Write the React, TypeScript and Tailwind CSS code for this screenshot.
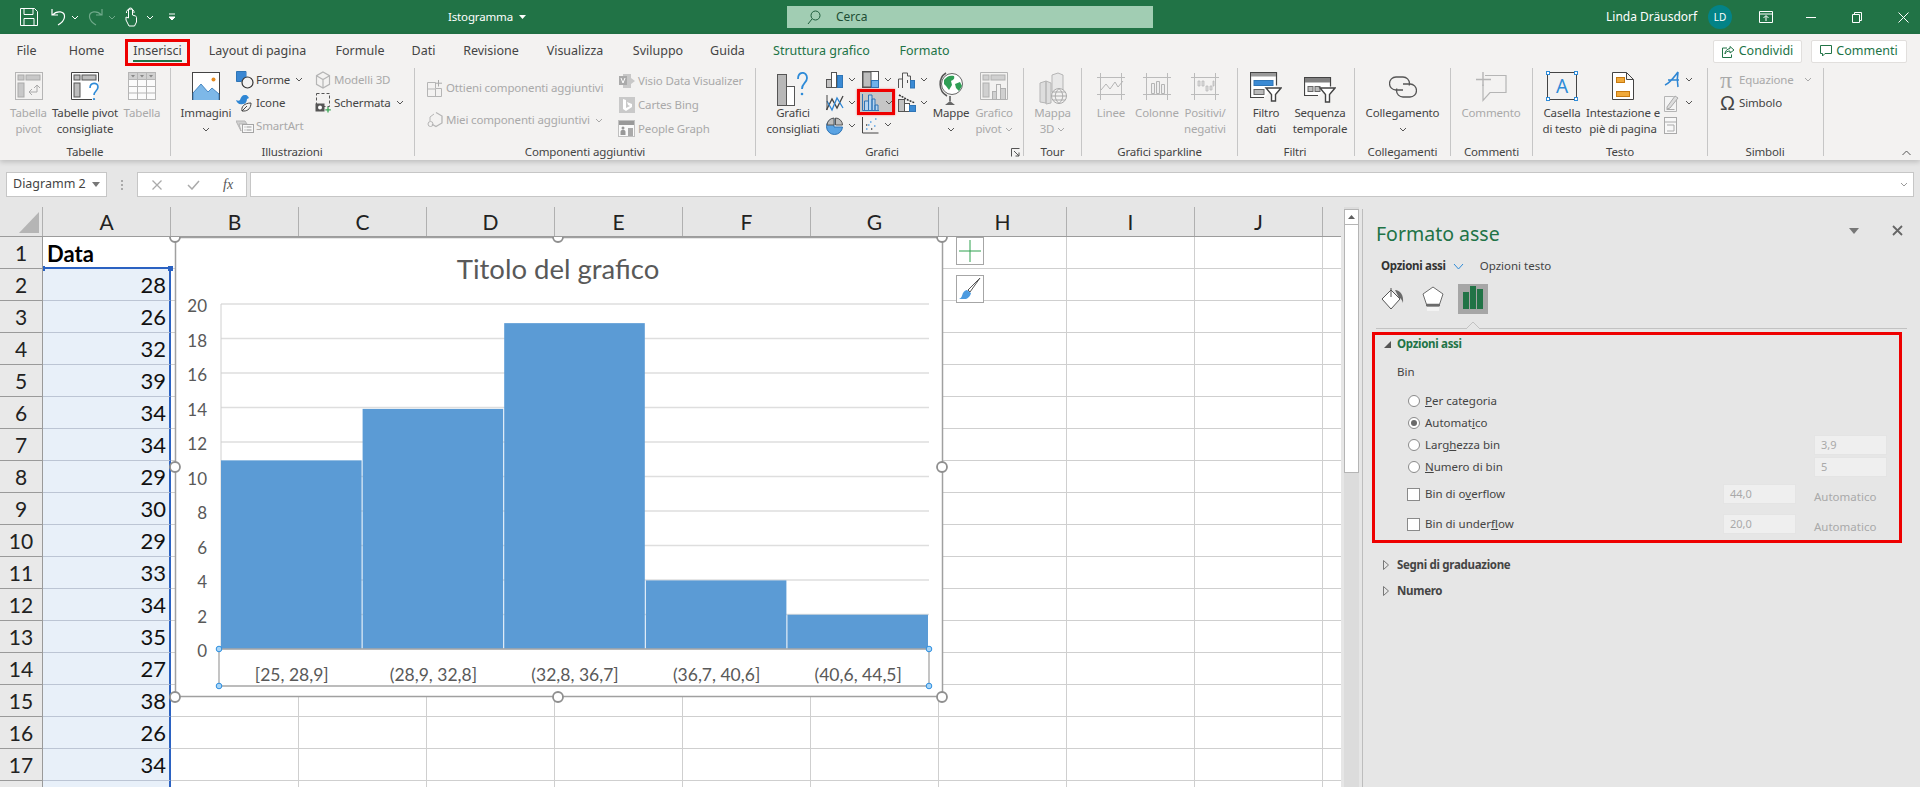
import React from 'react';

const MUTED = '#a9a9a9';
const rows = [null, 28, 26, 32, 39, 34, 34, 29, 30, 29, 33, 34, 35, 27, 38, 26, 34, null];
const columns = ['A', 'B', 'C', 'D', 'E', 'F', 'G', 'H', 'I', 'J'];

const Chev = ({ c = '#555', className = '' }: { c?: string; className?: string }) => (
  <svg width="8" height="5" viewBox="0 0 8 5" className={`shrink-0 ${className}`}>
    <path d="M1 1l3 3 3-3" fill="none" stroke={c} strokeWidth="1" />
  </svg>
);

const Ic = ({ w = 28, h = 28, children }: { w?: number; h?: number; children: React.ReactNode }) => (
  <svg width={w} height={h} viewBox={`0 0 ${w} ${h}`} className="shrink-0">
    {children}
  </svg>
);

// ---- ribbon icons ----
const PivotIcon = () => (
  <Ic>
    <rect x=".5" y=".5" width="27" height="27" fill="none" stroke="#b5b5b5" />
    <rect x="3" y="3" width="6" height="5" fill="#c8c8c8" stroke="#aaa" />
    <rect x="11" y="3" width="14" height="5" fill="#c8c8c8" stroke="#aaa" />
    <rect x="3" y="11" width="6" height="14" fill="#c8c8c8" stroke="#aaa" />
    <path d="M22 13v7h-8m3-3l-3 3 3 3M19 16l3-3 3 3" fill="none" stroke="#aaa" />
  </Ic>
);
const PivotHelpIcon = () => (
  <Ic>
    <path d="M21 27.500H.5V.5h27v9" fill="#fff" stroke="#444" />
    <rect x="3" y="3" width="6" height="5" fill="#bdbdbd" stroke="#555" />
    <rect x="11" y="3" width="14" height="5" fill="#bdbdbd" stroke="#555" />
    <rect x="3" y="11" width="6" height="14" fill="#bdbdbd" stroke="#555" />
    <path d="M19 16c0-6 8-6 8-1 0 4-4 4-4 8" fill="none" stroke="#2e8bd8" strokeWidth="1.600" />
    <circle cx="23" cy="27" r="1.100" fill="#2e8bd8" />
  </Ic>
);
const TableIcon = () => (
  <Ic>
    <rect x=".5" y=".5" width="27" height="27" fill="#fbfbfb" stroke="#b5b5b5" />
    <rect x="1" y="1" width="26" height="6" fill="#d0d0d0" />
    <path d="M9.500 1v26M18.500 1v26M1 7.500h26M1 14.500h26M1 21h26" stroke="#b5b5b5" fill="none" />
    <path d="M3 3h4L5 5.500zM12 3h4l-2 2.500zM21 3h4l-2 2.500z" fill="#888" />
  </Ic>
);
const ImagesIcon = () => (
  <Ic>
    <rect x=".5" y=".5" width="27" height="27" fill="#fff" stroke="#444" />
    <path d="M1 21l8-9 7 8 4-4 7 6v7H1z" fill="#7db8e8" stroke="#2e75b6" strokeWidth=".8" />
    <circle cx="21.500" cy="7.500" r="2" fill="#e58a1f" />
  </Ic>
);
const ShapesIcon = () => (
  <Ic w={18} h={18}>
    <path d="M10 7.500V.5H.5v10h5" fill="#3a87d2" stroke="#2e75b6" />
    <rect x="1" y="1" width="9" height="9" fill="#3a87d2" />
    <circle cx="11.500" cy="11.500" r="5.500" fill="#f3f2f1" stroke="#333" strokeWidth="1.200" />
  </Ic>
);
const IconsIcon = () => (
  <Ic w={18} h={18}>
    <path d="M0 6c2 1 3 1 4 0 1-3 2-5 5-5s3 2 4 3l-2 1c0 3-2 5-4 5-4 1-6-1-7-4z" fill="#2e86d4" />
    <path d="M6 17c-1-4 2-8 9-8 0 5-3 8-7 8zM6 17l5-5" fill="#f3f2f1" stroke="#444" />
  </Ic>
);
const SmartArtIcon = () => (
  <Ic w={18} h={18}>
    <path d="M0 4h9l2 3H3l2 7z" fill="#d0d0d0" stroke="#b5b5b5" />
    <rect x="6.500" y="7.500" width="11" height="8" fill="#f8f8f8" stroke="#a5a5a5" />
    <path d="M8.500 10h1m1 0h5m-7 3h1m1 0h5" stroke="#999" />
  </Ic>
);
const Model3DIcon = () => (
  <Ic w={16} h={18}>
    <path d="M8 1l6.500 3.700v8.600L8 17l-6.500-3.700V4.700zM1.500 4.700L8 8.500l6.500-3.800M8 8.500V17" fill="none" stroke="#b5b5b5" strokeWidth="1.200" />
  </Ic>
);
const ScreenshotIcon = () => (
  <Ic w={16} h={20}>
    <rect x="1.500" y=".5" width="13" height="13" fill="none" stroke="#555" strokeDasharray="3 2" />
    <rect x=".5" y="10.500" width="9" height="8" fill="#555" />
    <circle cx="5" cy="14.500" r="2" fill="#fff" />
    <path d="M13 14v5.500M10.300 16.800h5.500" stroke="#3aa655" strokeWidth="1.300" />
  </Ic>
);
const AddInsIcon = () => (
  <Ic w={16} h={18}>
    <path d="M.5 3.500h8v6h6v8H.5zM.5 10h8M8.500 10v7.500" fill="none" stroke="#b5b5b5" />
    <path d="M11.500 1v6.500M8.500 4.200h6.500" stroke="#aaa" fill="none" />
  </Ic>
);
const MyAddInsIcon = () => (
  <Ic w={16} h={18}>
    <path d="M9 1.500l6 3.500v7l-6 3.500-4-2.300" fill="none" stroke="#b5b5b5" strokeWidth="1.300" />
    <circle cx="3.500" cy="13" r="2.500" fill="none" stroke="#b5b5b5" />
    <path d="M7 3L3 6v4" fill="none" stroke="#b5b5b5" />
  </Ic>
);
const VisioIcon = () => (
  <Ic w={18} h={18}>
    <path d="M5 2h8v4l4 3-4 3v4H5v-4L1 9l4-3z" fill="#c8c8c8" />
    <rect x="1" y="4" width="8" height="9" fill="#aaa" />
    <path d="M3 6l2 5 2-5" stroke="#fff" fill="none" />
  </Ic>
);
const BingIcon = () => (
  <Ic w={18} h={18}>
    <rect x="1" y="1" width="16" height="16" fill="#c9c9c9" />
    <path d="M5 3l3 1v8l4-2-2-1-1-3 5 2v3l-6 4-3-2z" fill="#fff" />
  </Ic>
);
const PeopleIcon = () => (
  <Ic w={18} h={18}>
    <rect x=".5" y=".5" width="16" height="16" fill="#fafafa" stroke="#c0c0c0" />
    <rect x="1" y="1" width="15" height="4" fill="#999" />
    <circle cx="5" cy="8" r="1.500" fill="#999" />
    <path d="M2.500 15v-3c0-3 5-3 5 0v3z" fill="#999" />
    <rect x="10" y="8" width="5" height="8" fill="#aaa" />
  </Ic>
);
const RecommendedIcon = () => (
  <Ic w={32} h={34}>
    <rect x=".5" y="2.500" width="9" height="31" fill="#b8b8b8" stroke="#555" />
    <rect x="9.500" y="14.500" width="8" height="19" fill="#fff" stroke="#555" />
    <path d="M21 7c0-8 9-8 9-1 0 5-5 5-5 11" fill="none" stroke="#2e8bd8" strokeWidth="1.800" />
    <circle cx="25" cy="22" r="1.300" fill="#2e8bd8" />
  </Ic>
);
const BarsIcon = () => (
  <Ic w={18} h={18}>
    <rect x=".5" y="8.500" width="5" height="8" fill="#c2c2c2" stroke="#555" />
    <rect x="5.500" y="1.500" width="5" height="15" fill="#fff" stroke="#555" />
    <rect x="11.500" y="4.500" width="5" height="12" fill="#3a8ad4" stroke="#2e75b6" />
  </Ic>
);
const TreemapIcon = () => (
  <Ic w={18} h={18}>
    <rect x=".5" y=".5" width="16" height="16" fill="#fff" stroke="#555" />
    <rect x="1" y="1" width="8" height="15" fill="#bdbdbd" stroke="#555" />
    <rect x="9.500" y="9.500" width="7" height="7" fill="#6fb1ea" stroke="#2e75b6" />
  </Ic>
);
const WaterfallIcon = () => (
  <Ic w={18} h={18}>
    <path d="M.5 17V8h4V2h5v3h3v12" fill="none" stroke="#555" />
    <path d="M4.500 17V8M9.500 9v3" stroke="#555" fill="none" />
    <rect x="12.500" y="9.500" width="4" height="7.500" fill="#3a8ad4" stroke="#2e75b6" />
  </Ic>
);
const LineIcon = () => (
  <Ic w={18} h={18}>
    <path d="M.5 16L6 5l5 9 6-12" fill="none" stroke="#444" strokeWidth="1.300" />
    <path d="M1 7l5 9 5-12 6 10" fill="none" stroke="#2e86d4" strokeWidth="1.300" />
    <path d="M1 16V1" stroke="#444" />
  </Ic>
);
const HistogramIcon = () => (
  <Ic w={18} h={18}>
    <path d="M.5 1v16.500H17" fill="none" stroke="#2e75b6" />
    <path d="M2.500 17V8h4v9M6.500 17V2h3.500v15M10 17V6h3v11M13 17v-5h3v5" fill="#b8d4ee" stroke="#2e75b6" />
  </Ic>
);
const ComboIcon = () => (
  <Ic w={18} h={20}>
    <rect x=".5" y="6.500" width="6" height="12" fill="#c2c2c2" stroke="#555" />
    <rect x="6.500" y="10.500" width="5" height="8" fill="#fff" stroke="#555" />
    <rect x="11.500" y="12.500" width="6" height="6" fill="#3a8ad4" stroke="#2e75b6" />
    <path d="M1 2l9 5 7 3" stroke="#333" strokeDasharray="2 1" strokeWidth="1.500" fill="none" />
  </Ic>
);
const PieIcon = () => (
  <Ic w={18} h={18}>
    <path d="M8 1.500A8 8 0 1 0 16.500 10H8z" fill="#5aa3e3" stroke="#2e75b6" />
    <path d="M8 1A8 8 0 0 0 1 8h7z" fill="#bdbdbd" stroke="#555" />
    <path d="M9.500 1.500a7 7 0 0 1 7 7h-7z" fill="#bdbdbd" stroke="#555" transform="translate(0 -.5)" />
  </Ic>
);
const ScatterIcon = () => (
  <Ic w={18} h={18}>
    <path d="M.5 1v16h16" fill="none" stroke="#444" />
    <path d="M4 13h1.500M8 6h1.500M12 10h1.500M13 3h1.500M6 9h1.500" stroke="#5aa3e3" strokeWidth="1.500" />
    <path d="M4 9h1.300M9 13h1.300" stroke="#444" strokeWidth="1.300" />
  </Ic>
);
const GlobeIcon = () => (
  <Ic w={26} h={34}>
    <circle cx="14" cy="12" r="10.500" fill="#fff" stroke="#666" />
    <path d="M6 8c3-4 6-5 10-4 1 3-1 4-3 5l1 4-3 5-3-4-2-2zM17 12l5-2 2 4-3 5-3-3z" fill="#2f9e55" />
    <path d="M8 1C0 6 0 19 9 24" fill="none" stroke="#555" strokeWidth="1.500" />
    <path d="M12 24v5" stroke="#555" strokeWidth="1.500" />
    <path d="M12 29l-5 4h10z" fill="#666" />
  </Ic>
);
const PivotChartIcon = () => (
  <Ic>
    <path d="M27.500 27.500H.5V.5h27z" fill="none" stroke="#b5b5b5" />
    <rect x="3" y="3" width="6" height="5" fill="#d0d0d0" stroke="#b0b0b0" />
    <rect x="11" y="3" width="14" height="5" fill="#d0d0d0" stroke="#b0b0b0" />
    <rect x="3" y="11" width="6" height="14" fill="#d0d0d0" stroke="#b0b0b0" />
    <rect x="12.500" y="19.500" width="4" height="8" fill="#d0d0d0" stroke="#b0b0b0" />
    <rect x="16.500" y="12.500" width="4" height="15" fill="#f3f2f1" stroke="#b0b0b0" />
    <rect x="20.500" y="16.500" width="5" height="11" fill="#d0d0d0" stroke="#b0b0b0" />
  </Ic>
);
const Map3DIcon = () => (
  <Ic w={28} h={34}>
    <path d="M1 11l6-2v22l-6-1zM7 9l5 2v20l-5 1z" fill="#ddd" stroke="#b5b5b5" />
    <path d="M13 3l6-2 5 2v17H13z" fill="#e8e8e8" stroke="#b5b5b5" />
    <circle cx="20" cy="24" r="7.500" fill="#f3f2f1" stroke="#aaa" />
    <path d="M12.500 24h15M20 16.500c-5 5-5 10 0 15m0-15c5 5 5 10 0 15M14 20h12M14 28h12" fill="none" stroke="#aaa" />
  </Ic>
);
const SparkFrame = ({ children }: { children: React.ReactNode }) => (
  <Ic>
    <path d="M0 5.500h28M0 22.500h28M3.500 1v27M24.500 1v27" stroke="#bbb" fill="none" />
    {children}
  </Ic>
);
const SparkLineIcon = () => (
  <SparkFrame>
    <path d="M4 18l5-6 4 5 5-7 3 5 5-6" fill="none" stroke="#b5b5b5" />
  </SparkFrame>
);
const SparkColIcon = () => (
  <SparkFrame>
    <path d="M8.500 11.500h3v10h-3zM13.500 9.500h3v12h-3zM18.500 12.500h3v9h-3z" fill="#eee" stroke="#b5b5b5" />
  </SparkFrame>
);
const SparkPosIcon = () => (
  <SparkFrame>
    <path d="M7 9h2v5H7zM11 9h2v5h-2zM15 14h2v5h-2zM19 14h2v4h-2zM22 9h1v5h-1z" fill="#ddd" stroke="#b5b5b5" strokeWidth=".7" />
  </SparkFrame>
);
const SlicerIcon = () => (
  <Ic w={32} h={30}>
    <path d="M14 25.500H.5V.5h26v13" fill="#fff" stroke="#444" strokeWidth="1.200" />
    <rect x="1" y="1" width="25" height="3.500" fill="#999" />
    <rect x="4" y="8.500" width="19" height="5" fill="#3a8ad4" stroke="#2e75b6" />
    <rect x="4" y="17.500" width="10" height="5" fill="#bbb" stroke="#666" />
    <path d="M16 16h15l-5.500 6.500V29h-4v-6.500z" fill="#fff" stroke="#444" strokeWidth="1.400" />
  </Ic>
);
const TimelineIcon = () => (
  <Ic w={32} h={26}>
    <path d="M14 18.500H.5V.5h26v9" fill="#fff" stroke="#444" strokeWidth="1.200" />
    <rect x="1" y="1" width="25" height="4.500" fill="#808080" />
    <rect x="4" y="9.500" width="5" height="5" fill="#bbb" stroke="#666" />
    <rect x="11" y="9.500" width="5" height="5" fill="#bbb" stroke="#666" />
    <path d="M16 11h15l-5.500 6.500V25h-4v-7.500z" fill="#fff" stroke="#444" strokeWidth="1.400" />
  </Ic>
);
const LinkIcon = () => (
  <Ic w={28} h={24}>
    <path d="M14 15H7A6.500 6.500 0 0 1 7 2h7a6.500 6.500 0 0 1 6.500 6.500c0 1-.2 1.500-.5 2" fill="none" stroke="#555" strokeWidth="1.300" />
    <path d="M14 9h7a6.500 6.500 0 0 1 0 13h-7a6.500 6.500 0 0 1-6.500-6.500c0-1 .2-1.500.5-2" fill="none" stroke="#555" strokeWidth="1.300" />
  </Ic>
);
const CommentIcon = () => (
  <Ic w={32} h={31}>
    <path d="M10 3.500h21v17H15l-7 8v-16" fill="none" stroke="#b5b5b5" strokeWidth="1.200" />
    <path d="M8 0v14M1 7.500h15" stroke="#b5b5b5" strokeWidth="1.400" />
  </Ic>
);
const TextBoxIcon = () => (
  <div className="relative h-[28px] w-[30px] border border-[#444] flex items-center justify-center text-[19px] leading-none text-[#2e8bd8] font-['Noto_Sans']">
    A
    <span className="absolute -left-[2px] -top-[2px] h-[4px] w-[4px] border border-[#2e8bd8] bg-white" />
    <span className="absolute -right-[2px] -top-[2px] h-[4px] w-[4px] border border-[#2e8bd8] bg-white" />
    <span className="absolute -left-[2px] -bottom-[2px] h-[4px] w-[4px] border border-[#2e8bd8] bg-white" />
    <span className="absolute -right-[2px] -bottom-[2px] h-[4px] w-[4px] border border-[#2e8bd8] bg-white" />
  </div>
);
const HeaderFooterIcon = () => (
  <Ic w={22} h={28}>
    <path d="M.5.5h14l7 7v20H.5zM14.500.5v7h7" fill="#fff" stroke="#444" />
    <rect x="4.500" y="5.500" width="8" height="5" fill="#f0a93a" stroke="#c77a10" />
    <rect x="4.500" y="19.500" width="13" height="5" fill="#f0a93a" stroke="#c77a10" />
  </Ic>
);
const WordArtIcon = () => (
  <Ic w={16} h={18}>
    <path d="M1 14C6 12 10 6 14 1c-1 5-1 10 0 15M4 9h11" fill="none" stroke="#2e86d4" strokeWidth="1.600" />
  </Ic>
);
const SignIcon = () => (
  <Ic w={16} h={18}>
    <path d="M.5 2.500h9l3 3v12H.5z" fill="#f4f4f4" stroke="#b5b5b5" />
    <path d="M3 13l8-11 3 2-8 10-3 1zM2.500 15.500h8" fill="#ddd" stroke="#aaa" />
  </Ic>
);
const ObjectIcon = () => (
  <Ic w={14} h={18}>
    <rect x=".5" y=".5" width="12" height="16" fill="#f8f8f8" stroke="#aaa" />
    <path d="M.5 5h12M3 8h7v6H3" fill="none" stroke="#aaa" />
  </Ic>
);

// ---- ribbon pieces ----
const Big = ({ icon, lines, w, muted, chevron, inlineChevron }: { icon: React.ReactNode; lines: string[]; w: string; muted?: boolean; chevron?: boolean; inlineChevron?: boolean }) => (
  <div className={`${w} shrink-0 flex flex-col items-center pt-[4px] text-[11.5px] tracking-[-0.15px] leading-[16px] ${muted ? 'text-[#a9a9a9]' : 'text-[#444]'}`}>
    <div className="h-[33px]">{icon}</div>
    {lines.map((l, i) => (
      <div key={l} className="whitespace-nowrap flex items-center gap-[3px]">
        {l}
        {inlineChevron && i === lines.length - 1 && <Chev c={MUTED} />}
      </div>
    ))}
    {chevron && (
      <div className="h-[16px] flex items-center">
        <Chev />
      </div>
    )}
  </div>
);

const Small = ({ icon, label, muted, chevron, h = 'h-[23px]', gap = 'gap-[2px]' }: { icon: React.ReactNode; label: string; muted?: boolean; chevron?: boolean; h?: string; gap?: string }) => (
  <div className={`${h} flex items-center ${gap} text-[11.5px] tracking-[-0.15px] whitespace-nowrap ${muted ? 'text-[#a9a9a9]' : 'text-[#444]'}`}>
    <span className="w-[18px] flex justify-center shrink-0">{icon}</span>
    <span>{label}</span>
    {chevron && <Chev c={muted ? MUTED : '#555'} className="ml-[3px]" />}
  </div>
);

const Group = ({ w, label, labelClass = '', children, extra }: { w: string; label: string; labelClass?: string; children: React.ReactNode; extra?: React.ReactNode }) => (
  <>
    <div className={`${w} shrink-0 flex flex-col`}>
      <div className="h-[76px] flex">{children}</div>
      <div className={`relative h-[16px] flex items-center justify-center text-[11.5px] tracking-[-0.15px] text-[#444] whitespace-nowrap ${labelClass}`}>
        {label}
        {extra}
      </div>
    </div>
    <div className="w-px h-[88px] shrink-0 bg-[#c6c6c6]" />
  </>
);

const ChartBtn = ({ icon }: { icon: React.ReactNode }) => (
  <div className="h-[23px] w-[36px] flex items-center gap-[4px]">
    {icon}
    <Chev />
  </div>
);

// ---- chart ----
const bars = [11, 14, 19, 4, 2];
const cats = ['[25, 28,9]', '(28,9, 32,8]', '(32,8, 36,7]', '(36,7, 40,6]', '(40,6, 44,5]'];
const ticks = [0, 2, 4, 6, 8, 10, 12, 14, 16, 18, 20];
const y0 = 412;
const gridUnit = 17.25;
const barUnit = 17.15;
const barW = 141.6;
const handles = [[0, 0], [383, 0], [767, 0], [0, 230], [767, 230], [0, 460], [383, 460], [767, 460]];
const axisHandles = [[44, 412], [44, 449], [754, 412], [754, 449]];

const Chart = () => (
  <svg width="768" height="460" viewBox="0 0 768 460" className="absolute left-[175px] top-[30px] overflow-visible font-['Lato']">
    <rect x="0.5" y="0.5" width="767" height="459" fill="#fff" stroke="#a0a0a0" strokeWidth="1.500" />
    <text x="383" y="42" textAnchor="middle" fontSize="27.500" fill="#595959">Titolo del grafico</text>
    {ticks.map(t => (
      <g key={t}>
        <line x1="46" x2="754" y1={y0 - t * gridUnit} y2={y0 - t * gridUnit} stroke="#dedede" strokeWidth="1.500" />
        <text x="32" y={y0 - t * gridUnit + 8} textAnchor="end" fontSize="17" fill="#595959">{t}</text>
      </g>
    ))}
    <line x1="46" x2="46" y1="67" y2="412" stroke="#d0d0d0" />
    {bars.map((v, i) => (
      <rect key={i} x={46 + i * barW} y={y0 - v * barUnit} width={barW - 1} height={v * barUnit} fill="#5b9bd5" />
    ))}
    <path d="M44 412H754V449H44Z" fill="none" stroke="#a6a6a6" strokeWidth="1.300" />
    {cats.map((c, i) => (
      <text key={c} x={46 + (i + 0.5) * barW} y="444" textAnchor="middle" fontSize="17.500" fill="#595959">{c}</text>
    ))}
    {axisHandles.map(([x, y]) => (
      <circle key={`${x}-${y}`} cx={x} cy={y} r="2.800" fill="#a8d5f7" stroke="#2e8fe0" />
    ))}
    {handles.map(([x, y]) => (
      <circle key={`${x}-${y}`} cx={x} cy={y} r="5" fill="#fff" stroke="#8f8f8f" strokeWidth="1.800" />
    ))}
  </svg>
);

// ---- format pane pieces ----
const Radio = ({ on }: { on?: boolean }) => (
  <span className="h-[12px] w-[12px] shrink-0 rounded-full border border-[#8a8a8a] bg-white flex items-center justify-center">
    {on && <span className="h-[6px] w-[6px] rounded-full bg-[#6a6a6a]" />}
  </span>
);
const Field = ({ v }: { v: string }) => (
  <div className="w-[73px] h-[20px] shrink-0 bg-[#efefef] border border-[#e4e4e4] pl-[6px] text-[11px] leading-[18px] text-[#a9a9a9]">{v}</div>
);
const Key = ({ c }: { c: string }) => <span className="underline">{c}</span>;

const RadioRow = ({ on, children, v }: { on?: boolean; children: React.ReactNode; v?: string }) => (
  <div className="h-[22px] flex items-center pl-[33px] pr-[12px] text-[11.5px] text-[#444]">
    <Radio on={on} />
    <span className="ml-[5px]">{children}</span>
    {v && <div className="ml-auto"><Field v={v} /></div>}
  </div>
);
const CheckRow = ({ v, children }: { v: string; children: React.ReactNode }) => (
  <div className="h-[30px] flex items-center pl-[32px] pr-[12px] text-[11.5px] text-[#444]">
    <span className="h-[13px] w-[13px] shrink-0 border border-[#8a8a8a] bg-white" />
    <span className="ml-[5px]">{children}</span>
    <div className="ml-auto flex items-center gap-[18px]">
      <Field v={v} />
      <span className="w-[73px] mt-[6px] text-[11.5px] text-[#a9a9a9]">Automatico</span>
    </div>
  </div>
);

export default function App() {
  return (
    <div className="w-[1920px] h-[787px] overflow-hidden bg-[#e6e6e6] font-['Noto_Sans',sans-serif]">
      {/* title bar */}
      <div className="h-[34px] bg-[#217346] flex items-center text-white text-[12px]">
        <div className="w-[787px] shrink-0 flex items-center pl-[20px]">
          <Ic w={18} h={18}>
            <path d="M.5.5h14l3 3v14H.5z" fill="none" stroke="#fff" />
            <path d="M4 .5v6h9v-6M4 17.500v-7h10v7" fill="none" stroke="#fff" />
          </Ic>
          <svg width="15" height="18" viewBox="0 0 15 18" className="ml-[13px]">
            <path d="M1 1v6h6M1.500 7C6 2 14 3 13.500 9c-.3 3-3 6-6.500 8" fill="none" stroke="#fff" strokeWidth="1.200" />
          </svg>
          <Chev c="#fff" className="ml-[5px]" />
          <svg width="15" height="18" viewBox="0 0 15 18" className="ml-[9px]">
            <path d="M14 1v6H8M13.500 7C9 2 1 3 1.500 9c.3 3 3 6 6.500 8" fill="none" stroke="#6fa98a" strokeWidth="1.200" />
          </svg>
          <Chev c="#6fa98a" className="ml-[5px]" />
          <svg width="12" height="20" viewBox="0 0 12 20" className="ml-[9px]">
            <path d="M3.500 11V3a2 2 0 0 1 4 0v5l3 1c1 .5 1 1 1 2v4l-2 4H4l-3-6V10l2.500 1M1.500 6C.5 1 10 .5 9 6" fill="none" stroke="#fff" />
          </svg>
          <Chev c="#fff" className="ml-[9px]" />
          <svg width="8" height="8" viewBox="0 0 8 8" className="ml-[14px]">
            <path d="M1 1h6M1 4l3 3 3-3z" fill="#fff" stroke="#fff" />
          </svg>
          <span className="ml-[272px] text-[11.5px] tracking-[-0.15px] whitespace-nowrap">Istogramma</span>
          <svg width="7" height="4" viewBox="0 0 7 4" className="ml-[6px]"><path d="M0 0h7L3.500 4z" fill="#fff" /></svg>
        </div>
        <div className="w-[366px] h-[22px] shrink-0 bg-[#a1cdb3] flex items-center pl-[20px] text-[12px] text-[#1e4d34]">
          <svg width="14" height="15" viewBox="0 0 14 15" fill="none" stroke="#1e5c3c">
            <circle cx="8.500" cy="5.500" r="4.500" />
            <path d="M5 9l-4 5" />
          </svg>
          <span className="ml-[15px]">Cerca</span>
        </div>
        <span className="ml-[453px] whitespace-nowrap text-[12px]">Linda Dräusdorf</span>
        <div className="ml-[11px] h-[24px] w-[24px] rounded-full bg-[#038387] flex items-center justify-center text-[10px]">LD</div>
        <svg width="14" height="12" viewBox="0 0 14 12" className="ml-[27px]" fill="none" stroke="#fff">
          <path d="M.5.5h13v11H.5zM.5 3h13M7 10V5M4.500 7L7 4.500 9.500 7" />
        </svg>
        <div className="ml-[33px] w-[10px] h-px bg-white" />
        <svg width="10" height="11" viewBox="0 0 10 11" className="ml-[36px]" fill="none" stroke="#fff">
          <path d="M.5 2.500h7v8h-7zM2.500 2.500v-2h7v8H7.500" />
        </svg>
        <svg width="11" height="11" viewBox="0 0 11 11" className="ml-[36px]" stroke="#fff">
          <path d="M.5.5l10 10M10.500.5l-10 10" />
        </svg>
      </div>

      {/* ribbon */}
      <div className="h-[126px] bg-[#f3f2f1] shadow-[0_2px_5px_rgba(0,0,0,0.18)] relative">
        <div className="h-[34px] flex items-center pl-[5px] text-[12.5px] text-[#444]">
          <div className="w-[43px] text-center">File</div>
          <div className="w-[77px] text-center">Home</div>
          <div className="w-[65px] h-[27px] mt-[3px] border-[3px] border-[#ee0000] flex flex-col items-center pt-[1px]">
            <span className="leading-[16px]">Inserisci</span>
            <span className="w-[49px] h-[2px] bg-[#217346] mt-[1px]" />
          </div>
          <div className="w-[135px] text-center">Layout di pagina</div>
          <div className="w-[70px] text-center">Formule</div>
          <div className="w-[57px] text-center">Dati</div>
          <div className="w-[78px] text-center">Revisione</div>
          <div className="w-[90px] text-center">Visualizza</div>
          <div className="w-[76px] text-center">Sviluppo</div>
          <div className="w-[63px] text-center">Guida</div>
          <div className="w-[125px] text-center text-[#217346]">Struttura grafico</div>
          <div className="w-[81px] text-center text-[#217346]">Formato</div>
          <div className="ml-auto flex gap-[9px] pr-[13px] text-[#217346] text-[12.5px]">
            <div className="w-[89px] h-[23px] bg-white border border-[#e1dfdd] rounded-[2px] flex items-center justify-center gap-[4px]">
              <svg width="13" height="13" viewBox="0 0 13 13" fill="none" stroke="#217346">
                <path d="M8 1.500l4 3.500-4 3V6C5 6 3.500 7.500 3 9c0-3 2-5 5-5.500zM5 3H.5v9.500h9V9.500" />
              </svg>
              Condividi
            </div>
            <div className="w-[96px] h-[23px] bg-white border border-[#e1dfdd] rounded-[2px] flex items-center justify-center gap-[4px]">
              <svg width="12" height="12" viewBox="0 0 12 12" fill="none" stroke="#217346">
                <path d="M.5.5h11v8H5L2.500 11V8.500h-2z" />
              </svg>
              Commenti
            </div>
          </div>
        </div>

        <div className="flex items-start">
          <Group w="w-[170px]" label="Tabelle">
            <div className="pl-[1px] flex">
              <Big w="w-[55px]" muted icon={<PivotIcon />} lines={['Tabella', 'pivot']} />
              <Big w="w-[58px]" icon={<PivotHelpIcon />} lines={['Tabelle pivot', 'consigliate']} />
              <Big w="w-[56px]" muted icon={<TableIcon />} lines={['Tabella']} />
            </div>
          </Group>

          <Group w="w-[243px]" label="Illustrazioni" labelClass="pr-[1px]">
            <div className="pl-[5px] flex">
              <Big w="w-[60px]" icon={<ImagesIcon />} lines={['Immagini']} chevron />
              <div className="w-[78px]">
                <Small icon={<ShapesIcon />} label="Forme" chevron />
                <Small icon={<IconsIcon />} label="Icone" />
                <Small muted icon={<SmartArtIcon />} label="SmartArt" />
              </div>
              <div>
                <Small muted icon={<Model3DIcon />} label="Modelli 3D" />
                <Small icon={<ScreenshotIcon />} label="Schermata" chevron />
              </div>
            </div>
          </Group>

          <Group w="w-[340px]" label="Componenti aggiuntivi">
            <div className="pl-[11px] pt-[9px] w-[202px]">
              <Small muted icon={<AddInsIcon />} label="Ottieni componenti aggiuntivi" h="h-[22px]" />
              <div className="h-[10px]" />
              <Small muted icon={<MyAddInsIcon />} label="Miei componenti aggiuntivi" chevron h="h-[22px]" />
            </div>
            <div className="pl-[1px] pt-[1px]">
              <Small muted icon={<VisioIcon />} label="Visio Data Visualizer" h="h-[24px]" />
              <Small muted icon={<BingIcon />} label="Cartes Bing" h="h-[24px]" />
              <Small muted icon={<PeopleIcon />} label="People Graph" h="h-[24px]" />
            </div>
          </Group>

          <Group
            w="w-[267px]"
            label="Grafici"
            labelClass="pr-[15px]"
            extra={
              <svg width="9" height="9" viewBox="0 0 9 9" className="absolute right-[3px] top-[4px]" fill="none" stroke="#555">
                <path d="M.5 8.500v-8h8M3 3l5 5M8 4.500V8H4.500" />
              </svg>
            }
          >
            <div className="pl-[4px] flex">
              <Big w="w-[66px]" icon={<RecommendedIcon />} lines={['Grafici', 'consigliati']} />
              <div>
                <ChartBtn icon={<BarsIcon />} />
                <ChartBtn icon={<LineIcon />} />
                <ChartBtn icon={<PieIcon />} />
              </div>
              <div className="w-[36px]">
                <ChartBtn icon={<TreemapIcon />} />
                <div className="w-[38px] h-[26px] -ml-[5px] -my-[2px] relative border-[3px] border-[#ee0000] bg-[#c6c6c6] flex items-center gap-[5px] pl-[2px] shadow-[0_0_2px_rgba(238,0,0,0.5)]">
                  <HistogramIcon />
                  <Chev />
                </div>
                <ChartBtn icon={<ScatterIcon />} />
              </div>
              <div>
                <ChartBtn icon={<WaterfallIcon />} />
                <ChartBtn icon={<ComboIcon />} />
              </div>
              <Big w="w-[34px]" icon={<GlobeIcon />} lines={['Mappe']} chevron />
              <Big w="w-[52px]" muted icon={<PivotChartIcon />} lines={['Grafico', 'pivot']} inlineChevron />
            </div>
          </Group>

          <Group w="w-[57px]" label="Tour">
            <Big w="w-[57px]" muted icon={<Map3DIcon />} lines={['Mappa', '3D']} inlineChevron />
          </Group>

          <Group w="w-[155px]" label="Grafici sparkline">
            <div className="pl-[6px] flex">
              <Big w="w-[46px]" muted icon={<SparkLineIcon />} lines={['Linee']} />
              <Big w="w-[46px]" muted icon={<SparkColIcon />} lines={['Colonne']} />
              <Big w="w-[50px]" muted icon={<SparkPosIcon />} lines={['Positivi/', 'negativi']} />
            </div>
          </Group>

          <Group w="w-[116px]" label="Filtri" labelClass="pr-[2px]">
            <div className="pl-[3px] flex">
              <Big w="w-[50px]" icon={<SlicerIcon />} lines={['Filtro', 'dati']} />
              <Big w="w-[58px]" icon={<div className="pt-[5px]"><TimelineIcon /></div>} lines={['Sequenza', 'temporale']} />
            </div>
          </Group>

          <Group w="w-[95px]" label="Collegamenti">
            <Big w="w-[95px]" icon={<div className="pt-[3px]"><LinkIcon /></div>} lines={['Collegamento']} chevron />
          </Group>

          <Group w="w-[81px]" label="Commenti">
            <Big w="w-[80px]" muted icon={<CommentIcon />} lines={['Commento']} />
          </Group>

          <Group w="w-[174px]" label="Testo">
            <div className="pl-[4px] flex">
              <Big w="w-[50px]" icon={<TextBoxIcon />} lines={['Casella', 'di testo']} />
              <Big w="w-[72px]" icon={<HeaderFooterIcon />} lines={['Intestazione e', 'piè di pagina']} />
              <div className="pl-[5px]">
                <div className="h-[23px] flex items-center gap-[5px]"><WordArtIcon /><Chev /></div>
                <div className="h-[23px] flex items-center gap-[5px]"><SignIcon /><Chev /></div>
                <div className="h-[23px] flex items-center"><ObjectIcon /></div>
              </div>
            </div>
          </Group>

          <Group w="w-[115px]" label="Simboli" labelClass="pr-[1px]">
            <div className="pl-[12px]">
              <div className="h-[23px] flex items-center text-[11.5px] tracking-[-0.15px] text-[#a9a9a9]">
                <span className="w-[19px] text-[24px] leading-none font-['Liberation_Serif']">π</span>
                Equazione
                <Chev c={MUTED} className="ml-[10px]" />
              </div>
              <div className="h-[23px] flex items-center text-[11.5px] tracking-[-0.15px] text-[#444]">
                <span className="w-[19px] text-[20px] leading-none font-['Liberation_Sans']">Ω</span>
                Simbolo
              </div>
            </div>
          </Group>

          <div className="flex-1 flex justify-end items-end h-[92px] pr-[9px] pb-[4px]">
            <svg width="9" height="6" viewBox="0 0 9 6" fill="none" stroke="#555"><path d="M.5 5l4-4 4 4" /></svg>
          </div>
        </div>
      </div>

      {/* formula bar */}
      <div className="h-[25px] mt-[12px] flex items-stretch text-[#444]">
        <div className="ml-[6px] w-[101px] bg-white border border-[#c6c6c6] flex items-center pl-[6px] text-[12.5px] justify-between pr-[6px]">
          Diagramm 2
          <svg width="8" height="5" viewBox="0 0 8 5"><path d="M0 0h8L4 5z" fill="#777" /></svg>
        </div>
        <div className="w-[30px] flex flex-col items-center justify-center gap-[2px]">
          <span className="w-[2px] h-[2px] bg-[#aaa]" />
          <span className="w-[2px] h-[2px] bg-[#aaa]" />
          <span className="w-[2px] h-[2px] bg-[#aaa]" />
        </div>
        <div className="w-[110px] bg-white border border-[#c6c6c6] flex items-center">
          <svg width="10" height="10" viewBox="0 0 10 10" className="ml-[14px]" stroke="#aaa" strokeWidth="1.300"><path d="M.5.5l9 9M9.500.5l-9 9" /></svg>
          <svg width="13" height="10" viewBox="0 0 13 10" className="ml-[25px]" fill="none" stroke="#aaa" strokeWidth="1.500"><path d="M1 5l4 4 7-8" /></svg>
          <span className="ml-[23px] text-[14px] italic font-['Liberation_Serif'] text-[#555]">fx</span>
        </div>
        <div className="ml-[3px] w-[1664px] bg-white border border-[#c6c6c6] flex items-center justify-end pr-[5px]">
          <Chev c="#999" />
        </div>
      </div>

      {/* work area */}
      <div className="mt-[10px] flex">
        <div className="relative w-[1341px] shrink-0 overflow-visible font-['Lato'] text-[#111]">
          {/* column headers sit above the chart so its top handles are cut by them */}
          <div className="relative z-10 flex h-[30px] bg-[#e6e6e6] border-b border-[#9c9c9c]">
            <div className="w-[43px] shrink-0 border-r border-[#b0b0b0] relative">
              <svg width="20" height="21" viewBox="0 0 20 21" className="absolute right-[3px] bottom-[3px]"><path d="M20 0v21H0z" fill="#b5b5b5" /></svg>
            </div>
            {columns.map(c => (
              <div key={c} className="w-[128px] shrink-0 border-r border-[#b0b0b0] flex items-center justify-center text-[21px] text-[#222]">{c}</div>
            ))}
          </div>
          {/* rows */}
          {rows.map((v, i) => (
            <div key={i} className="flex h-[32px]">
              <div className="w-[43px] shrink-0 bg-[#e9e9e9] border-r border-b border-[#9a9a9a] flex items-center justify-center text-[21px] text-[#222]">{i < 17 ? i + 1 : ''}</div>
              {i === 0 ? (
                <div className="w-[128px] shrink-0 bg-white flex items-center pl-[4px] font-bold text-[22px] text-black">Data</div>
              ) : (
                <div className="w-[128px] shrink-0 bg-[#e8f0f9] border-b border-[#bcc5d4] border-r-[2px] border-r-[#2b62c2] flex items-center justify-end pr-[3px] text-[22px]">{v}</div>
              )}
              {columns.slice(1).map(c => (
                <div key={c} className="w-[128px] shrink-0 bg-white border-r border-b border-[#cfcfcf]" />
              ))}
              <div className="w-[18px] shrink-0 bg-white border-b border-[#cfcfcf]" />
            </div>
          ))}
          {/* selection handles on A */}
          <div className="absolute left-[43px] top-[60px] h-[2px] w-[128px] bg-[#2b62c2]" />
          <div className="absolute left-[43px] top-[59px] h-[5px] w-[2px] bg-[#2b62c2]" />
          <div className="absolute left-[168px] top-[59px] h-[5px] w-[5px] bg-[#2b62c2]" />

          <Chart />

          <div className="absolute left-[956px] top-[30px] h-[28px] w-[28px] bg-white border border-[#a6a6a6] flex items-center justify-center">
            <svg width="22" height="22" viewBox="0 0 22 22" stroke="#2fa14f"><path d="M11 0v22M0 11h22" /></svg>
          </div>
          <div className="absolute left-[956px] top-[68px] h-[28px] w-[28px] bg-white border border-[#a6a6a6] flex items-center justify-center">
            <svg width="24" height="24" viewBox="0 0 24 24">
              <path d="M22 1L12 15l-2-2z" fill="#fff" stroke="#555" />
              <path d="M9 13l4 3c-1 4-4 6-6 6H1c3-1 3-4 4-6 1-2 3-3 4-3z" fill="#4c9be0" />
            </svg>
          </div>
        </div>

        {/* scrollbar */}
        <div className="ml-[3px] w-[15px] shrink-0 h-[580px] bg-[#dcdcdc] flex flex-col">
          <div className="h-[16px] mt-[2px] bg-white border border-[#b5b5b5] flex items-center justify-center">
            <svg width="7" height="4" viewBox="0 0 7 4"><path d="M3.500 0L7 4H0z" fill="#606060" /></svg>
          </div>
          <div className="h-[248px] bg-white border-x border-b border-[#b5b5b5]" />
        </div>

        {/* format pane */}
        <div className="ml-[3px] flex-1 h-[580px] mt-[2px] border-l border-[#bdbdbd] text-[#444] pl-[9px] pr-[18px]">
          <div className="h-[28px] mt-[11px] pl-[4px] flex items-center">
            <span className="text-[19.5px] leading-none text-[#217346]">Formato asse</span>
            <svg width="10" height="6" viewBox="0 0 10 6" className="ml-auto mr-[33px] -mt-[7px]"><path d="M0 0h10L5 6z" fill="#777" /></svg>
            <svg width="11" height="11" viewBox="0 0 11 11" className="-mr-[1px] -mt-[7px]" stroke="#666" strokeWidth="1.800"><path d="M1 1l9 9M10 1l-9 9" /></svg>
          </div>
          <div className="h-[20px] mt-[8px] pl-[9px] flex items-center text-[11.5px]">
            <span className="font-bold tracking-[-0.3px] text-[#333]">Opzioni assi</span>
            <svg width="11" height="7" viewBox="0 0 11 7" className="ml-[7px]" fill="none" stroke="#2e8bd8"><path d="M1 1l4.500 5L10 1" /></svg>
            <span className="ml-[16px]">Opzioni testo</span>
          </div>
          <div className="h-[30px] mt-[8px] pl-[9px] flex items-center">
            <svg width="24" height="24" viewBox="0 0 24 24">
              <path d="M10 3l9 9-9 10-9-10z" fill="#fff" stroke="#555" />
              <path d="M10 1v9" stroke="#555" />
              <path d="M14 3c5 0 9 5 8 13-1-3-2-5-4-5z" fill="#6b6b6b" />
            </svg>
            <svg width="24" height="26" viewBox="0 0 24 26" className="ml-[16px]">
              <path d="M12 1l10 7-4 12H6L2 8z" fill="#fff" stroke="#6b6b6b" />
              <path d="M5 19h14" stroke="#6b6b6b" strokeWidth="2.500" />
              <path d="M6 21h12v4H6z" fill="#f3f3f3" />
            </svg>
            <div className="ml-[13px] w-[30px] h-[30px] bg-[#a6a6a6] flex items-end justify-center gap-[1px] pb-[5px]">
              <span className="w-[6px] h-[17px] bg-[#217346]" />
              <span className="w-[6px] h-[23px] bg-[#217346]" />
              <span className="w-[6px] h-[20px] bg-[#217346]" />
            </div>
          </div>
          <div className="relative h-px mt-[14px] ml-[4px] -mr-[5px] bg-[#c2c2c2]">
            <svg width="14" height="8" viewBox="0 0 14 8" className="absolute left-[90px] -top-[7px]"><path d="M0 8l7-7 7 7" fill="#e6e6e6" stroke="#c2c2c2" /></svg>
          </div>
          <div className="h-[211px] mt-[3px] pt-[1px] border-[3px] border-[#ee0000]">
            <div className="h-[16px] flex items-center pl-[9px] text-[11.5px]">
              <svg width="7" height="7" viewBox="0 0 7 7"><path d="M7 0v7H0z" fill="#555" /></svg>
              <span className="ml-[6px] font-bold tracking-[-0.3px] text-[#217346]">Opzioni assi</span>
            </div>
            <div className="h-[16px] mt-[12px] pl-[22px] flex items-center text-[11.5px]">Bin</div>
            <div className="mt-[10px]">
              <RadioRow><Key c="P" />er categoria</RadioRow>
              <RadioRow on>Automat<Key c="i" />co</RadioRow>
              <RadioRow v="3,9">Lar<Key c="g" /><Key c="h" />ezza bin</RadioRow>
              <RadioRow v="5"><Key c="N" />umero di bin</RadioRow>
              <div className="h-[1px]" />
              <CheckRow v="44,0">Bin di o<Key c="v" />erflow</CheckRow>
              <CheckRow v="20,0">Bin di under<Key c="f" />low</CheckRow>
            </div>
          </div>
          <div className="h-[20px] mt-[12px] pl-[11px] flex items-center text-[11.5px]">
            <svg width="6" height="10" viewBox="0 0 6 10"><path d="M.5.5L5.500 5 .5 9.500z" fill="#e6e6e6" stroke="#777" /></svg>
            <span className="ml-[8px] font-bold tracking-[-0.3px]">Segni di graduazione</span>
          </div>
          <div className="h-[20px] mt-[6px] pl-[11px] flex items-center text-[11.5px]">
            <svg width="6" height="10" viewBox="0 0 6 10"><path d="M.5.5L5.500 5 .5 9.500z" fill="#e6e6e6" stroke="#777" /></svg>
            <span className="ml-[8px] font-bold tracking-[-0.3px]">Numero</span>
          </div>
        </div>
      </div>
    </div>
  );
}
